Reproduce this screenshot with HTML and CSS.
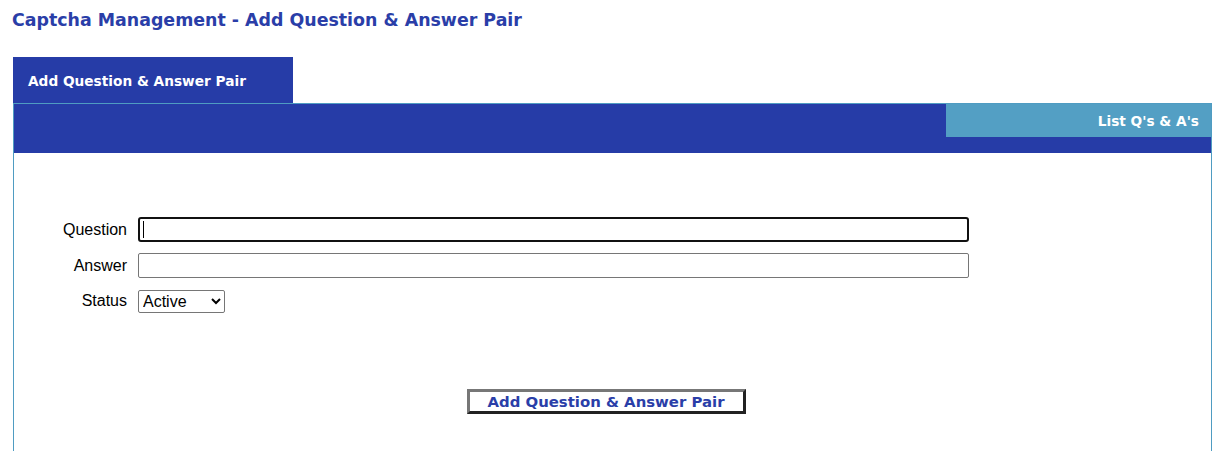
FILE: index.html
```html
<!DOCTYPE html>
<html lang="en">
<head>
<meta charset="utf-8">
<title>Captcha Management</title>
<link rel="stylesheet" href="styles.css">
</head>
<body>
<div class="page">
  <h1 class="title">Captcha Management - Add Question &amp; Answer Pair</h1>
  <div class="tabs">
    <div class="tab active">Add Question &amp; Answer Pair</div>
  </div>
  <div class="panel">
    <div class="band">
      <a class="list-link" href="#">List Q's &amp; A's</a>
    </div>
    <div class="panel-body">
      <form class="form">
        <label class="label" for="q">Question</label>
        <div class="field-wrap">
          <input class="field focused" id="q" type="text">
          <span class="caret"></span>
        </div>
        <label class="label" for="a">Answer</label>
        <input class="field" id="a" type="text">
        <label class="label" for="s">Status</label>
        <div><select class="select" id="s"><option>Active</option><option>Inactive</option></select></div>
      </form>
      <div class="actions">
        <button class="submit" type="button">Add Question &amp; Answer Pair</button>
      </div>
    </div>
  </div>
</div>
</body>
</html>
```
FILE: styles.css
```css
html, body {
  margin: 0;
  padding: 0;
  background: #fff;
}
.page {
  padding: 0 0 0 12px;
  width: 1200px;
}
.title {
  margin: 0;
  padding-top: 10px;
  height: 57px;
  box-sizing: border-box;
  font-family: "DejaVu Sans", Verdana, sans-serif;
  font-weight: bold;
  font-size: 17.4px;
  line-height: 20px;
  color: #2a3ea8;
}
.tabs {
  display: flex;
  padding-left: 1px;
}
.tab {
  width: 280px;
  height: 46px;
  box-sizing: border-box;
  padding: 16px 0 0 15px;
  background: #263ca7;
  color: #fff;
  font-family: "DejaVu Sans", Verdana, sans-serif;
  font-weight: bold;
  font-size: 13.7px;
  line-height: 17px;
}
.panel {
  margin-left: 1px;
  width: 1199px;
  border-top: 1px solid #4f9cc2;
  border-left: 1px solid #4f9cc2;
  border-right: 1px solid #4f9cc2;
  box-sizing: border-box;
}
.band {
  height: 49px;
  background: #263ca7;
  display: flex;
  justify-content: flex-end;
  align-items: flex-start;
}
.list-link {
  width: 265px;
  height: 33px;
  box-sizing: border-box;
  padding: 9px 12px 0 0;
  text-align: right;
  background: #539fc4;
  color: #fff;
  text-decoration: none;
  font-family: "DejaVu Sans", Verdana, sans-serif;
  font-weight: bold;
  font-size: 13.7px;
  line-height: 17px;
}
.panel-body {
  min-height: 320px;
  padding-top: 64px;
}
.form {
  display: grid;
  grid-template-columns: 113px 831px;
  column-gap: 11px;
  row-gap: 11px;
  align-items: center;
  font-family: "Liberation Sans", Arial, sans-serif;
  font-size: 16px;
  color: #000;
}
.label {
  text-align: right;
}
.field-wrap {
  position: relative;
  display: flex;
}
.field {
  width: 831px;
  height: 25px;
  box-sizing: border-box;
  margin: 0;
  border: 1px solid #767676;
  border-radius: 2px;
  padding: 1px 4px;
  font-family: "Liberation Sans", Arial, sans-serif;
  font-size: 16px;
  outline: none;
}
.field.focused {
  border: 2px solid #111;
  border-radius: 3px;
}
.caret {
  position: absolute;
  left: 5px;
  top: 4px;
  width: 1px;
  height: 17px;
  background: #000;
}
.select {
  height: 23px;
  width: 87px;
  margin: 1px 0 0 0;
  border: 1px solid #767676;
  border-radius: 2px;
  background: #fff;
  font-family: "Liberation Sans", Arial, sans-serif;
  font-size: 16px;
  color: #000;
}
.actions {
  display: flex;
  justify-content: center;
  padding: 76px 13px 0 0;
}
.submit {
  width: 279px;
  height: 25px;
  box-sizing: border-box;
  background: #fff;
  border-style: solid;
  border-width: 3px;
  border-color: #777 #222 #222 #777;
  padding: 0;
  font-family: "DejaVu Sans", Verdana, sans-serif;
  font-weight: bold;
  font-size: 14.9px;
  line-height: 18px;
  color: #2a3ea8;
}
```
